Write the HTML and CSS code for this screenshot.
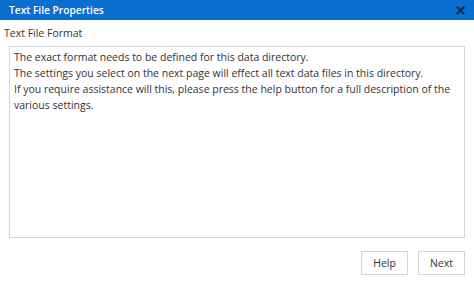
FILE: index.html
```html
<!DOCTYPE html>
<html lang="en">
<head>
    <meta charset="UTF-8">
    <title>Text File Properties</title>
    <link rel="stylesheet" href="styles.css">
</head>
<body>
    <div class="dialog">
        <div class="title-bar">
            <span class="title">Text File Properties</span>
            <svg class="close" width="9" height="9" viewBox="0 0 9 9">
                <path d="M1.5 1.5 L7.5 7.5 M7.5 1.5 L1.5 7.5" stroke="#1d2a3a" stroke-width="2.2" stroke-linecap="square"/>
            </svg>
        </div>
        <div class="content">
            <div class="label">Text File Format</div>
            <div class="text-box">
                <p>The exact format needs to be defined for this data directory.</p>
                <p>The settings you select on the next page will effect all text data files in this directory.</p>
                <p>If you require assistance will this, please press the help button for a full description of the various settings.</p>
            </div>
            <div class="buttons">
                <button>Help</button>
                <button>Next</button>
            </div>
        </div>
    </div>
</body>
</html>
```

FILE: styles.css
```css
* {
    margin: 0;
    padding: 0;
    box-sizing: border-box;
}
body {
    font-family: 'Open Sans', sans-serif;
    background: #fff;
    color: #333;
    width: 474px;
    height: 283px;
    overflow: hidden;
}
.title-bar {
    background: #0a6ed1;
    height: 20px;
    display: flex;
    align-items: center;
    justify-content: space-between;
    padding: 0 9px 0 9px;
}
.title {
    color: #fff;
    font-size: 10.2px;
    font-weight: 600;
}
.close {
    display: block;
}
.content {
    padding: 5px 9px 0 9px;
}
.label {
    font-size: 10.5px;
    line-height: 16px;
    margin-left: -5px;
}
.text-box {
    margin-top: 5px;
    height: 192px;
    border: 1px solid #d4d4d4;
    padding: 2px 4px;
    font-size: 10.5px;
    line-height: 16px;
}
.buttons {
    display: flex;
    justify-content: flex-end;
    gap: 10px;
    margin-top: 13px;
}
.buttons button {
    font-family: 'Open Sans', sans-serif;
    font-size: 10.5px;
    color: #333;
    background: #fff;
    border: 1px solid #d4d4d4;
    width: 47px;
    height: 24px;
}
```
